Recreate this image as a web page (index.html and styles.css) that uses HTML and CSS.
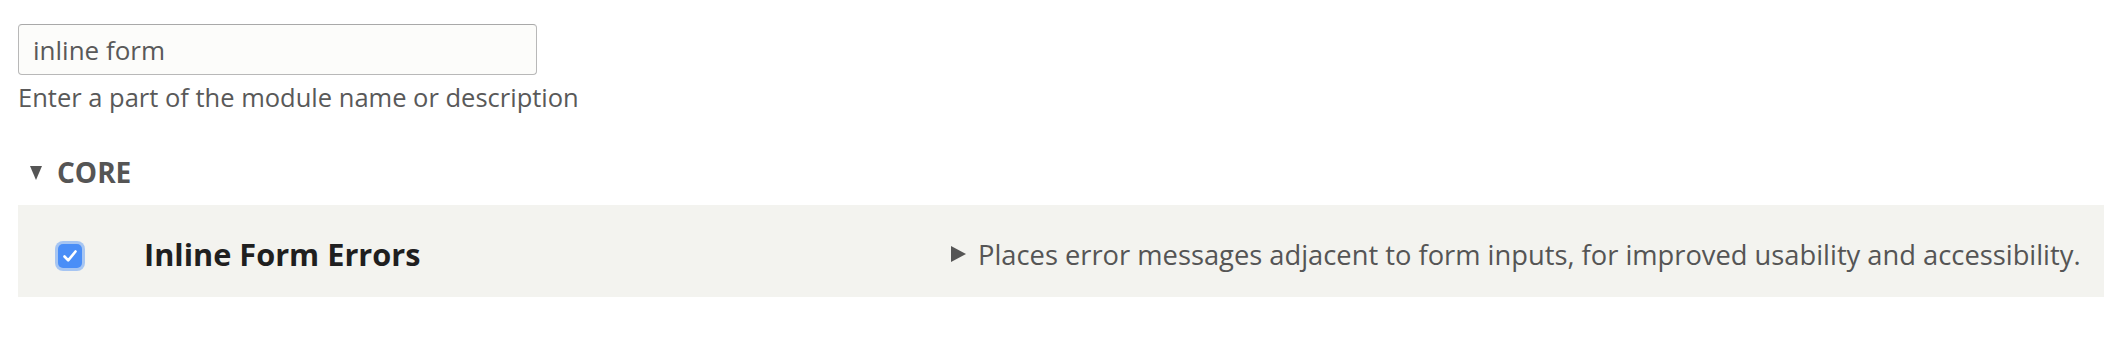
FILE: index.html
```html
<!DOCTYPE html>
<html lang="en">
<head>
    <meta charset="UTF-8">
    <meta name="viewport" content="width=device-width, initial-scale=1.0">
    <title>Extend</title>
    <link rel="stylesheet" href="styles.css">
</head>
<body>
    <div class="filter">
        <input class="filter-input" type="search" value="inline form">
        <div class="filter-description">Enter a part of the module name or description</div>
    </div>
    <details class="package" open>
        <summary class="package-title">CORE</summary>
        <div class="module-row">
            <div class="module-checkbox">
                <span class="checkbox">
                    <svg viewBox="0 0 24 24" width="24" height="24">
                        <path d="M6.5 12.5 L10.2 16.4 L17.5 7.5" fill="none" stroke="#fff" stroke-width="2.6" stroke-linecap="round" stroke-linejoin="round"/>
                    </svg>
                </span>
            </div>
            <div class="module-name">Inline Form Errors</div>
            <div class="module-description">Places error messages adjacent to form inputs, for improved usability and accessibility.</div>
        </div>
    </details>
</body>
</html>
```

FILE: styles.css
```css
body {
    margin: 0;
    padding: 24px 0 0 18px;
    background-color: #fff;
    color: #595959;
    font-family: "Open Sans", "Noto Sans", sans-serif;
    overflow: hidden;
}

.filter-input {
    box-sizing: border-box;
    width: 519px;
    height: 51px;
    margin: 0;
    padding: 0 14px;
    border: 1px solid #b8b8b8;
    border-top-color: #a9a9a9;
    border-radius: 4px;
    background-color: #fcfcfa;
    color: #595959;
    font-family: inherit;
    font-size: 26px;
    outline: none;
    -webkit-appearance: none;
    appearance: none;
    display: block;
}

.filter-description {
    margin-top: 4px;
    font-size: 25.5px;
    line-height: 1.47;
}

.package {
    margin-top: 35px;
}

.package-title {
    list-style: none;
    display: flex;
    align-items: center;
    gap: 15px;
    padding-left: 12px;
    font-size: 28px;
    font-weight: bold;
    line-height: 1.5;
    color: #555;
    cursor: pointer;
}

.package-title::-webkit-details-marker {
    display: none;
}

.package-title::before {
    content: "";
    width: 0;
    height: 0;
    border-left: 6.5px solid transparent;
    border-right: 6.5px solid transparent;
    border-top: 14px solid #555;
    margin-top: 2px;
}

.module-row {
    margin-top: 12px;
    height: 92px;
    background-color: #f3f3ef;
    display: grid;
    grid-template-columns: 126px 807px 1fr;
    align-items: center;
}

.module-checkbox {
    padding-left: 40px;
    padding-top: 9px;
}

.checkbox {
    display: block;
    width: 24px;
    height: 24px;
    border-radius: 5px;
    background-color: #4a8ef7;
    box-shadow: 0 0 0 3px rgba(74, 142, 247, 0.45);
}

.checkbox svg {
    display: block;
}

.module-name {
    font-size: 30.7px;
    font-weight: bold;
    color: #1f1f1f;
    padding-top: 6px;
}

.module-description {
    display: flex;
    align-items: center;
    gap: 12px;
    font-size: 27.3px;
    color: #555;
    white-space: nowrap;
    padding-top: 6px;
}

.module-description::before {
    content: "";
    flex: none;
    width: 0;
    height: 0;
    border-top: 8.5px solid transparent;
    border-bottom: 8.5px solid transparent;
    border-left: 15px solid #555;
}
```
